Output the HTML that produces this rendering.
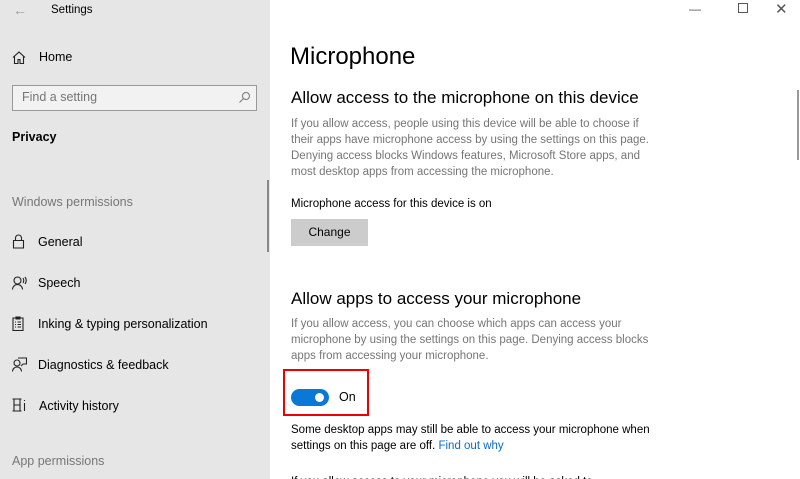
<!DOCTYPE html>
<html><head><meta charset="utf-8"><style>
*{margin:0;padding:0;box-sizing:border-box}
html{width:800px;height:479px;overflow:hidden}
body{width:800px;height:479px;overflow:hidden;background:#fff;font-family:"Liberation Sans",sans-serif;position:relative;color:#000}
#w{position:absolute;left:0;top:0;width:800px;height:479px;overflow:hidden}
.side{position:absolute;left:0;top:0;width:270px;height:479px;background:#e6e6e6}
.a{position:absolute;white-space:nowrap}
.s{font-size:12.5px}
.g{color:#767676}
.b{font-size:11.5px;line-height:16px}
.h{font-size:17px}
svg{position:absolute}
</style></head><body><div id="w">
<div class="side">
<div class="a" style="left:13px;top:2px;font-size:14px;color:#999">←</div>
<div class="a" style="left:51px;top:4px;font-size:11.5px">Settings</div>
<svg style="left:12px;top:51px" width="14" height="13" viewBox="0 0 14 13" fill="none" stroke="#222" stroke-width="1.1"><path d="M1 6.5L7 1l6 5.5M2.5 5v7.5h3.5V8.5h2v4h3.5V5"/></svg>
<div class="a s" style="left:39px;top:50px">Home</div>
<div class="a" style="left:12px;top:85px;width:245px;height:26px;border:1.5px solid #999;background:#f2f2f2"></div>
<div class="a s g" style="left:22px;top:90px">Find a setting</div>
<svg style="left:238px;top:91px" width="13" height="13" viewBox="0 0 13 13" fill="none" stroke="#777" stroke-width="1"><circle cx="8" cy="5" r="3.5"/><path d="M5.5 7.5L1.5 11.5"/></svg>
<div class="a" style="left:12px;top:130px;font-size:12.5px;font-weight:bold">Privacy</div>
<div class="a s g" style="left:12px;top:195px">Windows permissions</div>
<div class="a" style="left:267px;top:180px;width:2px;height:72px;background:#888"></div>
<svg style="left:12px;top:234px" width="13" height="15" viewBox="0 0 13 15" fill="none" stroke="#222" stroke-width="1.1"><path d="M3.5 6.5V4a3 3 0 016 0v2.5M1.5 6.5h10v7.5h-10z"/></svg>
<div class="a s" style="left:38px;top:235px">General</div>
<svg style="left:12px;top:276px" width="16" height="14" viewBox="0 0 16 14" fill="none" stroke="#222" stroke-width="1.1"><circle cx="5.5" cy="4.5" r="3.5"/><path d="M0.5 13.5a5 5 0 0110 0M11 2q1.5 2.5 0 5M13 1q2.5 3.5 0 7"/></svg>
<div class="a s" style="left:38px;top:276px">Speech</div>
<svg style="left:12px;top:316px" width="12" height="15" viewBox="0 0 12 15" fill="none" stroke="#222" stroke-width="1.1"><path d="M1 2h10v12.5H1zM4 1h4v2H4zM3 6h1M5.5 6h3.5M3 8.5h1M5.5 8.5h3.5M3 11h1M5.5 11h3.5"/></svg>
<div class="a s" style="left:38px;top:317px">Inking &amp; typing personalization</div>
<svg style="left:12px;top:357px" width="15" height="15" viewBox="0 0 15 15" fill="none" stroke="#222" stroke-width="1.1"><circle cx="5" cy="6" r="3"/><path d="M0.5 14.5a4.5 4.5 0 019 0M6 1h8.5v6H11l-2 2"/></svg>
<div class="a s" style="left:38px;top:358px">Diagnostics &amp; feedback</div>
<svg style="left:12px;top:398px" width="15" height="14" viewBox="0 0 15 14" fill="none" stroke="#222" stroke-width="1.1"><path d="M0.5 1h9M0.5 13h9M2 1v12M8 1v12M2 7h6M12.5 2v1M12.5 5v8"/></svg>
<div class="a s" style="left:39px;top:399px">Activity history</div>
<div class="a s g" style="left:12px;top:454px">App permissions</div>
</div>
<div class="a" style="left:689px;top:2px;font-size:12px;color:#555">—</div>
<div class="a" style="left:738px;top:3px;width:10px;height:10px;border:1px solid #555"></div>
<div class="a" style="left:775px;top:0px;font-size:15px;color:#555">✕</div>
<div class="a" style="left:797px;top:90px;width:2px;height:70px;background:#999"></div>
<div class="a" style="left:290px;top:43px;font-size:24px">Microphone</div>
<div class="a h" style="left:291px;top:88px">Allow access to the microphone on this device</div>
<div class="a b g" style="left:291px;top:116px">If you allow access, people using this device will be able to choose if<br>their apps have microphone access by using the settings on this page.<br>Denying access blocks Windows features, Microsoft Store apps, and<br>most desktop apps from accessing the microphone.</div>
<div class="a b" style="left:291px;top:196px">Microphone access for this device is on</div>
<div class="a" style="left:291px;top:219px;width:77px;height:27px;background:#ccc;font-size:12px;text-align:center;line-height:27px">Change</div>
<div class="a h" style="left:291px;top:289px">Allow apps to access your microphone</div>
<div class="a b g" style="left:291px;top:316px">If you allow access, you can choose which apps can access your<br>microphone by using the settings on this page. Denying access blocks<br>apps from accessing your microphone.</div>
<div class="a" style="left:283px;top:369px;width:86px;height:47px;border:2px solid #e00"></div>
<div class="a" style="left:291px;top:389px;width:38px;height:17px;border-radius:9px;background:#0a78d7"></div>
<div class="a" style="left:315px;top:393px;width:9px;height:9px;border-radius:50%;background:#fff"></div>
<div class="a" style="left:339px;top:390px;font-size:12.5px">On</div>
<div class="a b" style="left:291px;top:422px">Some desktop apps may still be able to access your microphone when<br>settings on this page are off. <span style="color:#0a6cc7">Find out why</span></div>
<div class="a b" style="left:291px;top:474px">If you allow access to your microphone you will be asked to</div>
</div></body></html>
